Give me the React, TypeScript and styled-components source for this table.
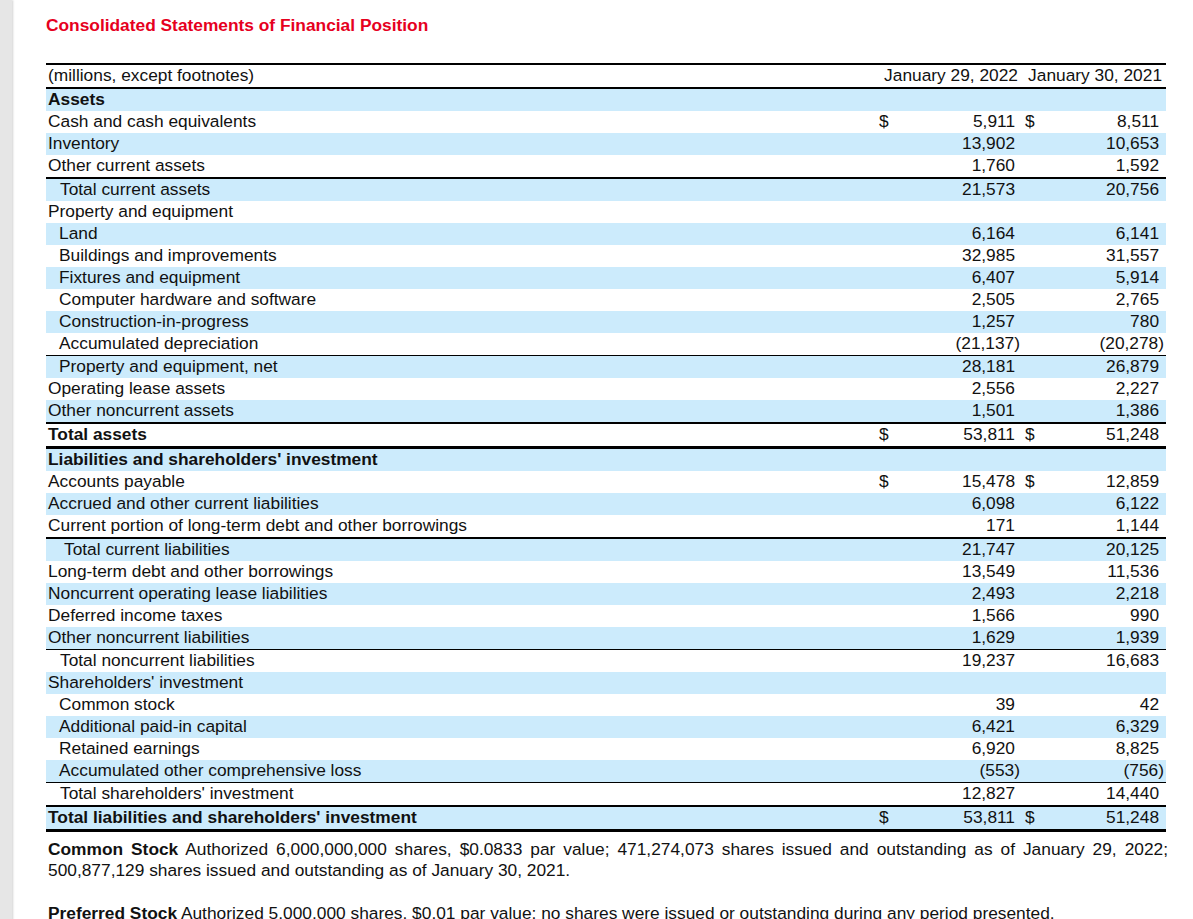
import React from 'react';
import styled, { createGlobalStyle } from 'styled-components';

const GlobalStyle = createGlobalStyle`
  html, body {
    margin: 0;
    padding: 0;
    background: #ffffff;
  }
  body {
    font-family: 'Liberation Sans', Arial, sans-serif;
    color: #111111;
    overflow: hidden;
  }
`;

const Viewer = styled.div`
  display: flex;
  min-height: 919px;
`;

const Gutter = styled.div`
  flex: 0 0 12px;
  background: #e6e6e6;
  box-shadow: 1px 0 2px rgba(0, 0, 0, 0.18);
`;

const Page = styled.div`
  flex: 1;
  padding: 15px 0 0 34px;
`;

const Title = styled.h1`
  margin: 0 0 28px 0;
  font-size: 17.33px;
  line-height: 20px;
  font-weight: bold;
  color: #e6001e;
`;

const Table = styled.table`
  width: 1120px;
  table-layout: fixed;
  border-collapse: separate;
  border-spacing: 0;
  font-size: 17.33px;
  border-top: 2px solid #000;
`;

const Col = styled.col<{ $w: number }>`
  width: ${(p) => p.$w}px;
`;

const Row = styled.tr<{ $band?: boolean; $top?: number; $bottom?: number }>`
  background: ${(p) => (p.$band ? '#ccebfc' : '#ffffff')};

  & > td {
    border-top: ${(p) => (p.$top ? `${p.$top}px solid #000` : 'none')};
    border-bottom: ${(p) => (p.$bottom ? `${p.$bottom}px solid #000` : 'none')};
  }
`;

const Cell = styled.td`
  height: 20px;
  padding: 0 2px 2px 2px;
  line-height: 20px;
  white-space: nowrap;
  vertical-align: middle;
  font-weight: normal;
`;

const Label = styled(Cell)<{ $indent?: number; $bold?: boolean }>`
  padding-left: ${(p) => 2 + (p.$indent || 0)}px;
  font-weight: ${(p) => (p.$bold ? 'bold' : 'normal')};
`;

const Dollar = styled(Cell)`
  padding-left: 3px;
`;

const Amount = styled(Cell)<{ $neg?: boolean }>`
  text-align: right;
  padding-right: ${(p) => (p.$neg ? '2px' : '7px')};
`;

const DateHead = styled(Cell)`
  text-align: right;
  padding-right: 4px;
`;

const Notes = styled.div`
  width: 1120px;
  padding: 7px 0 0 2px;
  font-size: 17.33px;
  line-height: 21px;
  text-align: justify;
`;

const Note = styled.p`
  margin: 0 0 22px 0;
`;

type Line = {
  label: string;
  a?: string;
  b?: string;
  dollar?: boolean;
  bold?: boolean;
  indent?: number;
  top?: number;
  bottom?: number;
};

const lines: Line[] = [
  { label: 'Assets', bold: true },
  { label: 'Cash and cash equivalents', a: '5,911', b: '8,511', dollar: true },
  { label: 'Inventory', a: '13,902', b: '10,653' },
  { label: 'Other current assets', a: '1,760', b: '1,592' },
  { label: 'Total current assets', a: '21,573', b: '20,756', indent: 12, top: 2 },
  { label: 'Property and equipment' },
  { label: 'Land', a: '6,164', b: '6,141', indent: 11 },
  { label: 'Buildings and improvements', a: '32,985', b: '31,557', indent: 11 },
  { label: 'Fixtures and equipment', a: '6,407', b: '5,914', indent: 11 },
  { label: 'Computer hardware and software', a: '2,505', b: '2,765', indent: 11 },
  { label: 'Construction-in-progress', a: '1,257', b: '780', indent: 11 },
  { label: 'Accumulated depreciation', a: '(21,137)', b: '(20,278)', indent: 11 },
  { label: 'Property and equipment, net', a: '28,181', b: '26,879', indent: 11, top: 1 },
  { label: 'Operating lease assets', a: '2,556', b: '2,227' },
  { label: 'Other noncurrent assets', a: '1,501', b: '1,386' },
  { label: 'Total assets', a: '53,811', b: '51,248', dollar: true, bold: true, top: 2, bottom: 3 },
  { label: "Liabilities and shareholders' investment", bold: true },
  { label: 'Accounts payable', a: '15,478', b: '12,859', dollar: true },
  { label: 'Accrued and other current liabilities', a: '6,098', b: '6,122' },
  { label: 'Current portion of long-term debt and other borrowings', a: '171', b: '1,144' },
  { label: 'Total current liabilities', a: '21,747', b: '20,125', indent: 16, top: 2 },
  { label: 'Long-term debt and other borrowings', a: '13,549', b: '11,536' },
  { label: 'Noncurrent operating lease liabilities', a: '2,493', b: '2,218' },
  { label: 'Deferred income taxes', a: '1,566', b: '990' },
  { label: 'Other noncurrent liabilities', a: '1,629', b: '1,939' },
  { label: 'Total noncurrent liabilities', a: '19,237', b: '16,683', indent: 12, top: 1 },
  { label: "Shareholders' investment" },
  { label: 'Common stock', a: '39', b: '42', indent: 11 },
  { label: 'Additional paid-in capital', a: '6,421', b: '6,329', indent: 11 },
  { label: 'Retained earnings', a: '6,920', b: '8,825', indent: 11 },
  { label: 'Accumulated other comprehensive loss', a: '(553)', b: '(756)', indent: 11 },
  { label: "Total shareholders' investment", a: '12,827', b: '14,440', indent: 12, top: 1 },
  { label: "Total liabilities and shareholders' investment", a: '53,811', b: '51,248', dollar: true, bold: true, top: 2, bottom: 3 },
];

const isNeg = (v?: string) => !!v && v.startsWith('(');

const App: React.FC = () => {
  return (
    <>
      <GlobalStyle />
      <Viewer>
        <Gutter />
        <Page>
          <Title>Consolidated Statements of Financial Position</Title>
          <Table>
            <colgroup>
              <Col $w={830} />
              <Col $w={22} />
              <Col $w={124} />
              <Col $w={22} />
              <Col $w={122} />
            </colgroup>
            <tbody>
              <Row $bottom={2}>
                <Label>(millions, except footnotes)</Label>
                <DateHead colSpan={2}>January 29, 2022</DateHead>
                <DateHead colSpan={2}>January 30, 2021</DateHead>
              </Row>
              {lines.map((l, i) => (
                <Row key={l.label} $band={i % 2 === 0} $top={l.top} $bottom={l.bottom}>
                  <Label $indent={l.indent} $bold={l.bold}>
                    {l.label}
                  </Label>
                  <Dollar>{l.dollar ? '$' : ''}</Dollar>
                  <Amount $neg={isNeg(l.a)}>{l.a}</Amount>
                  <Dollar>{l.dollar ? '$' : ''}</Dollar>
                  <Amount $neg={isNeg(l.b)}>{l.b}</Amount>
                </Row>
              ))}
            </tbody>
          </Table>
          <Notes>
            <Note>
              <b>Common Stock</b> Authorized 6,000,000,000 shares, $0.0833 par value; 471,274,073 shares issued and
              outstanding as of January 29, 2022; 500,877,129 shares issued and outstanding as of January 30, 2021.
            </Note>
            <Note>
              <b>Preferred Stock</b> Authorized 5,000,000 shares, $0.01 par value; no shares were issued or outstanding
              during any period presented.
            </Note>
          </Notes>
        </Page>
      </Viewer>
    </>
  );
};

export default App;
